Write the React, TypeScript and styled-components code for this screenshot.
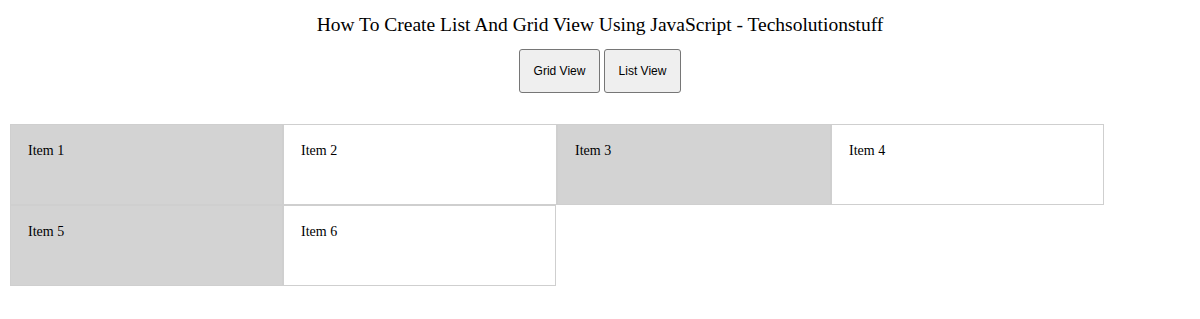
import React from "react";
import styled, { createGlobalStyle } from "styled-components";

const Global = createGlobalStyle`
  html, body { margin: 0; padding: 0; background: #fff; }
  body { font-family: "Liberation Serif", "Times New Roman", serif; color: #000; }
`;

const Page = styled.div`
  display: flex;
  flex-direction: column;
  padding: 13px 0 0 10px;
  width: 1190px;
`;

const Title = styled.h2`
  margin: 0;
  font-size: 19.5px;
  font-weight: normal;
  line-height: 24px;
  text-align: center;
  padding-right: 10px;
`;

const Toolbar = styled.div`
  display: flex;
  justify-content: center;
  gap: 4px;
  margin-top: 12px;
  padding-right: 10px;
`;

const ViewButton = styled.button<{ $w: number }>`
  width: ${(p) => p.$w}px;
  height: 44px;
  background: #efefef;
  border: 1px solid #767676;
  border-radius: 3px;
  font-family: "Liberation Sans", Arial, sans-serif;
  font-size: 12px;
  color: #000;
  padding: 0;
`;

const Grid = styled.div`
  display: flex;
  flex-wrap: wrap;
  width: 1094px;
  margin-top: 31px;
`;

const Cell = styled.div<{ $shade: boolean; $w: number }>`
  box-sizing: border-box;
  width: ${(p) => p.$w}px;
  height: 81px;
  padding: 17px 17px;
  background: ${(p) => (p.$shade ? "#d3d3d3" : "#fff")};
  border: 1px solid #cfcfcf;
  font-size: 14px;
  line-height: 18px;
`;

const widths = [273, 274, 274, 273, 273, 273];

export default function App() {
  return (
    <>
      <Global />
      <Page>
        <Title>How To Create List And Grid View Using JavaScript - Techsolutionstuff</Title>
        <Toolbar>
          <ViewButton $w={81}>Grid View</ViewButton>
          <ViewButton $w={77}>List View</ViewButton>
        </Toolbar>
        <Grid>
          {[1, 2, 3, 4, 5, 6].map((n, i) => (
            <Cell key={n} $shade={n % 2 === 1} $w={widths[i]}>
              Item {n}
            </Cell>
          ))}
        </Grid>
      </Page>
    </>
  );
}
